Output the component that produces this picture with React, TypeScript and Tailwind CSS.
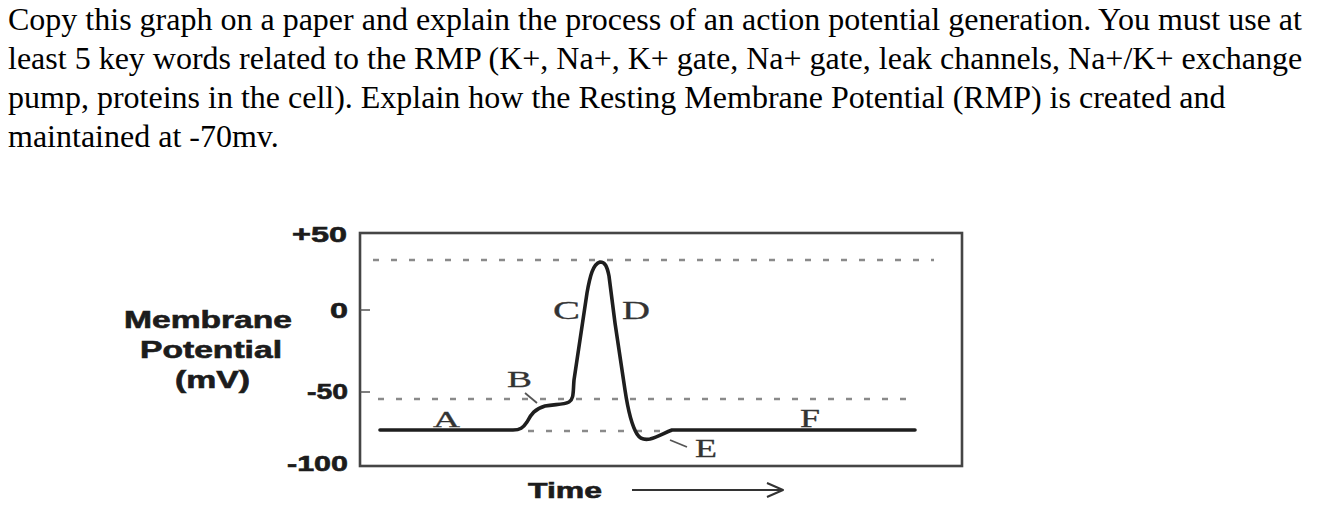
const serif = { fontFamily: '"Liberation Serif", "Times New Roman", serif' }

const lines = [
  'Copy this graph on a paper and explain the process of an action potential generation. You must use at',
  'least 5 key words related to the RMP (K+, Na+, K+ gate, Na+ gate, leak channels, Na+/K+ exchange',
  'pump, proteins in the cell). Explain how the Resting Membrane Potential (RMP) is created and',
  'maintained at -70mv.',
]

// y offset of the svg on the page; graph coordinates below are page coordinates
const TOP = 170

function Label({
  x,
  y,
  w,
  size,
  bold,
  children,
}: {
  x: number
  y: number
  w: number
  size: number
  bold?: boolean
  children: string
}) {
  return (
    <text
      x={x}
      y={y}
      textLength={w}
      lengthAdjust="spacingAndGlyphs"
      fontSize={size}
      fontWeight={bold ? 700 : 400}
      fontFamily={bold ? 'Liberation Sans, Arial, sans-serif' : 'Liberation Serif, Times New Roman, serif'}
      fill={bold ? '#1c1c1c' : '#333'}
      stroke={bold ? '#1c1c1c' : '#333'}
      strokeWidth={bold ? 0.6 : 0.3}
    >
      {children}
    </text>
  )
}

function Graph() {
  const curve =
    'M380 430 L513 430 C520 430 523 428 527 422 C531 414 535 409 545 406 ' +
    'C555 404 563 405 569 402 C574 399 573 392 574 380 L587 293 C590 276 593 264 600 262 ' +
    'C605 262 607 266 609 276 L615 323 L625 390 C628 410 632 426 637 434 C640 439 645 440 650 439 ' +
    'C658 437 664 433 672 430 L915 430'
  return (
    <svg width={1000} height={516 - TOP} className="block" viewBox={`0 ${TOP} 1000 ${516 - TOP}`}>
      {/* frame */}
      <rect x={360} y={233} width={602} height={233} fill="none" stroke="#454545" strokeWidth={2.6} />
      {/* ticks */}
      <line x1={360} y1={310} x2={370} y2={310} stroke="#555" strokeWidth={1.5} />
      <line x1={360} y1={392} x2={370} y2={392} stroke="#555" strokeWidth={1.5} />

      {/* threshold / peak guides */}
      <g stroke="#8a8a8a" strokeWidth={2.5} strokeDasharray="6 12">
        <line x1={373} y1={260} x2={934} y2={260} />
        <line x1={378} y1={399} x2={916} y2={399} />
        <line x1={528} y1={431} x2={667} y2={431} />
      </g>

      <path d={curve} fill="none" stroke="#1e1e1e" strokeWidth={3.6} strokeLinejoin="round" strokeLinecap="round" />

      {/* leaders */}
      <line x1={525} y1={393} x2={537} y2={403} stroke="#555" strokeWidth={1.8} />
      <line x1={670} y1={440} x2={687} y2={447} stroke="#555" strokeWidth={1.8} />

      {/* axis numbers */}
      <Label x={292} y={242} w={55} size={22} bold>+50</Label>
      <Label x={330} y={318} w={18} size={22} bold>0</Label>
      <Label x={307} y={399} w={41} size={22} bold>-50</Label>
      <Label x={287} y={471} w={61} size={22} bold>-100</Label>

      <Label x={124} y={328} w={168} size={23} bold>Membrane</Label>
      <Label x={140} y={358} w={142} size={23} bold>Potential</Label>
      <Label x={175} y={388} w={75} size={23} bold>(mV)</Label>

      {/* phase letters */}
      <Label x={433} y={427} w={27} size={24}>A</Label>
      <Label x={507} y={387} w={25} size={24}>B</Label>
      <Label x={553} y={319} w={27} size={26}>C</Label>
      <Label x={622} y={319} w={28} size={26}>D</Label>
      <Label x={695} y={457} w={22} size={26}>E</Label>
      <Label x={800} y={427} w={20} size={26}>F</Label>

      <Label x={528} y={498} w={74} size={22} bold>Time</Label>
      <line x1={632} y1={490} x2={782} y2={490} stroke="#333" strokeWidth={2} />
      <path d="M767 483 L783 490 L767 497" fill="none" stroke="#333" strokeWidth={2} strokeLinejoin="round" />
    </svg>
  )
}

export default function App() {
  return (
    <div className="w-[1318px] h-[516px] bg-white overflow-hidden">
      <div className="h-[170px] pl-[8px] text-[32px] leading-[39px] text-black" style={serif}>
        {lines.map((l) => (
          <div key={l} className="whitespace-nowrap">
            {l}
          </div>
        ))}
      </div>
      <Graph />
    </div>
  )
}
